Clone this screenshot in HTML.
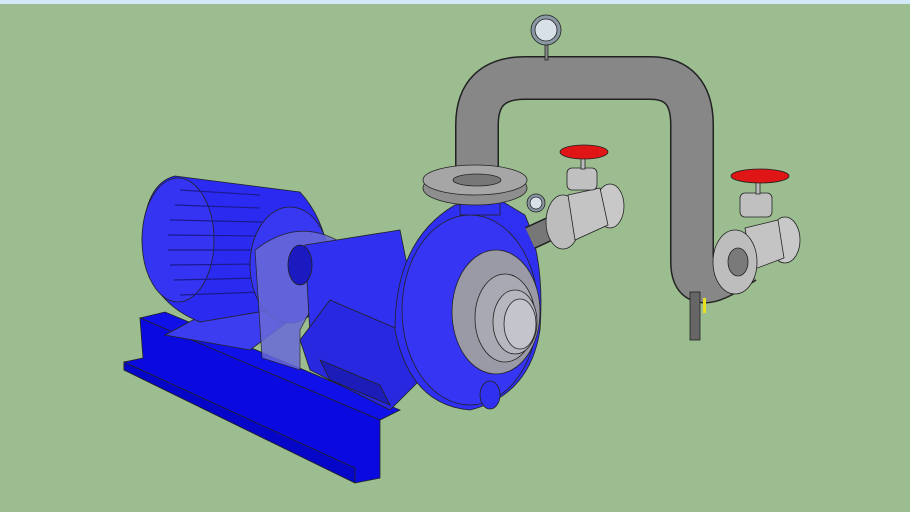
<!DOCTYPE html>
<html><head><style>
html,body{margin:0;padding:0;width:910px;height:512px;overflow:hidden;background:#9bbd8f}
</style></head><body>
<svg width="910" height="512" viewBox="0 0 910 512" xmlns="http://www.w3.org/2000/svg">
<rect x="0" y="0" width="910" height="512" fill="#9bbd8f"/>
<rect x="0" y="0" width="910" height="4" fill="#d3e9f7"/>
<g stroke="#222" stroke-width="0.8">
<polygon points="140,318 165,312 400,410 380,420" fill="#1010e8"/>
<polygon points="140,318 380,420 380,478 355,483 124,370 124,362 143,358" fill="#0a0ae0"/>
<polygon points="124,362 355,468 355,483 124,370" fill="#0606c8"/>
<polygon points="165,335 230,300 290,320 250,350" fill="#3c3cf0"/>
<path d="M175,176 L300,192 Q335,230 330,300 L200,322 Q145,300 142,240 Q145,183 175,176Z" fill="#2a2af0"/>
<ellipse cx="178" cy="240" rx="36" ry="62" fill="#3434f2"/>
<g stroke="#1a1a90" stroke-width="1.2">
<line x1="180" y1="190" x2="260" y2="195"/><line x1="175" y1="205" x2="260" y2="208"/>
<line x1="170" y1="220" x2="262" y2="222"/><line x1="168" y1="235" x2="262" y2="236"/>
<line x1="168" y1="250" x2="262" y2="250"/><line x1="170" y1="265" x2="262" y2="264"/>
<line x1="174" y1="280" x2="262" y2="278"/><line x1="180" y1="295" x2="262" y2="292"/>
</g>
<ellipse cx="290" cy="265" rx="40" ry="58" fill="#3838f2"/>
<path d="M255,250 Q300,215 345,245 L300,330 L300,370 L262,358Z" fill="#6a6ad8" opacity="0.85"/>
<path d="M305,245 L400,230 L420,330 L310,335Z" fill="#3030f0"/>
<polygon points="300,340 330,300 400,330 420,380 390,410 310,370" fill="#2828e0"/>
<polygon points="320,360 380,385 390,405 330,380" fill="#1c1cb8"/>
<ellipse cx="300" cy="265" rx="12" ry="20" fill="#1a1ac0"/>
<path d="M455,205 L500,200 L525,215 Q545,260 540,330 Q530,395 470,410 Q410,405 395,330 Q395,240 455,205Z" fill="#2f2ff2"/>
<ellipse cx="470" cy="310" rx="68" ry="95" fill="#3535f3"/>
<rect x="460" y="190" width="40" height="25" fill="#3030f0"/>
<ellipse cx="490" cy="395" rx="10" ry="14" fill="#3030f0"/>
<ellipse cx="496" cy="312" rx="44" ry="62" fill="#9a9aa6"/>
<ellipse cx="505" cy="318" rx="30" ry="44" fill="#a9a9b4"/>
<ellipse cx="515" cy="322" rx="22" ry="32" fill="#b7b7c0"/>
<ellipse cx="520" cy="324" rx="16" ry="25" fill="#c4c4cc"/>
</g>
<g fill="none" stroke-linecap="butt">
<path d="M477,178 L477,125 Q477,78 525,78 L650,78 Q692,78 692,125 L692,262 Q692,292 722,276 L745,262" stroke="#222" stroke-width="44"/>
<path d="M477,178 L477,125 Q477,78 525,78 L650,78 Q692,78 692,125 L692,262 Q692,292 722,276 L745,262" stroke="#878787" stroke-width="41"/>
<path d="M530,238 L580,215" stroke="#222" stroke-width="24"/>
<path d="M530,238 L580,215" stroke="#777" stroke-width="21"/>
</g>
<g stroke="#222" stroke-width="0.8">
<rect x="690" y="292" width="10" height="48" fill="#666"/>
<rect x="703" y="298" width="3" height="15" fill="#e8e020" stroke="none"/>
<ellipse cx="475" cy="188" rx="52" ry="17" fill="#8e8e8e"/>
<ellipse cx="475" cy="180" rx="52" ry="15" fill="#a6a6a6"/>
<ellipse cx="477" cy="180" rx="24" ry="6" fill="#777"/>
<ellipse cx="563" cy="222" rx="17" ry="27" fill="#bdbdbd"/>
<ellipse cx="610" cy="206" rx="14" ry="22" fill="#c8c8c8"/>
<path d="M568,195 L600,188 L608,225 L575,240Z" fill="#c4c4c4"/>
<rect x="567" y="168" width="30" height="22" rx="5" fill="#c0c0c0"/>
<rect x="581" y="155" width="4" height="14" fill="#bbb"/>
<ellipse cx="584" cy="152" rx="24" ry="7" fill="#e01515"/>
<ellipse cx="785" cy="240" rx="15" ry="23" fill="#c8c8c8"/>
<path d="M745,228 L778,220 L784,258 L752,270Z" fill="#c4c4c4"/>
<ellipse cx="735" cy="262" rx="22" ry="32" fill="#bdbdbd"/>
<ellipse cx="738" cy="262" rx="10" ry="14" fill="#7a7a7a"/>
<rect x="740" y="193" width="32" height="24" rx="5" fill="#c0c0c0"/>
<rect x="756" y="180" width="4" height="14" fill="#bbb"/>
<ellipse cx="760" cy="176" rx="29" ry="7" fill="#e01515"/>
<rect x="545" y="45" width="3" height="15" fill="#888"/>
<circle cx="546" cy="30" r="15" fill="#8a98a4"/>
<circle cx="546" cy="30" r="11" fill="#d8e0e8"/>
<circle cx="536" cy="203" r="9" fill="#8a98a4"/>
<circle cx="536" cy="203" r="6" fill="#d8e0e8"/>
</g>
</svg>
</body></html>
